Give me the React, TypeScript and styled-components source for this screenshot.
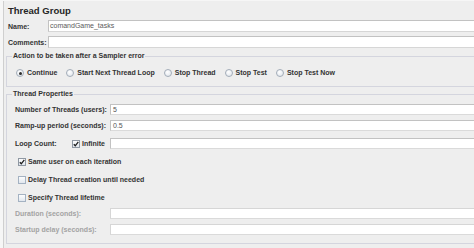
import React from 'react'

import styled, { createGlobalStyle } from 'styled-components'

const GlobalStyle = createGlobalStyle`
  html, body {
    margin: 0;
    padding: 0;
  }
  body {
    width: 474px;
    height: 248px;
    overflow: hidden;
    background: #f6f6f6;
    font-family: "Liberation Sans", Arial, sans-serif;
  }
`

export default function App() {
  return (
    <>
      <GlobalStyle />
      <Page>
        <Panel>
          <Title>Thread Group</Title>
          <TopRow $mt={2}>
            <TopLabel>Name:</TopLabel>
            <TopField>comandGame_tasks</TopField>
          </TopRow>
          <TopRow $mt={4}>
            <TopLabel>Comments:</TopLabel>
            <TopField />
          </TopRow>

          <Group $mt={3} $pt={7} $pb={8}>
            <Legend>Action to be taken after a Sampler error</Legend>
            <RadioRow>
              <RadioOption>
                <Radio $on />
                <OptionText>Continue</OptionText>
              </RadioOption>
              <RadioOption>
                <Radio />
                <OptionText>Start Next Thread Loop</OptionText>
              </RadioOption>
              <RadioOption>
                <Radio />
                <OptionText>Stop Thread</OptionText>
              </RadioOption>
              <RadioOption>
                <Radio />
                <OptionText>Stop Test</OptionText>
              </RadioOption>
              <RadioOption>
                <Radio />
                <OptionText>Stop Test Now</OptionText>
              </RadioOption>
            </RadioRow>
          </Group>

          <Group $mt={2} $pt={5} $pb={8}>
            <Legend>Thread Properties</Legend>
            <InputRow $mt={0}>
              <LabelCell>
                <FieldLabel>Number of Threads (users):</FieldLabel>
              </LabelCell>
              <Field>5</Field>
            </InputRow>
            <InputRow $mt={5}>
              <LabelCell>
                <FieldLabel>Ramp-up period (seconds):</FieldLabel>
              </LabelCell>
              <Field>0.5</Field>
            </InputRow>
            <InputRow $mt={7}>
              <LabelCell>
                <LoopLabel>Loop Count:</LoopLabel>
                <CheckBox $on>
                  <CheckMark />
                </CheckBox>
                <InlineText>Infinite</InlineText>
              </LabelCell>
              <Field />
            </InputRow>
            <CheckRow $mt={8}>
              <CheckBox $on>
                <CheckMark />
              </CheckBox>
              <OptionText>Same user on each iteration</OptionText>
            </CheckRow>
            <CheckRow $mt={8}>
              <CheckBox />
              <OptionText>Delay Thread creation until needed</OptionText>
            </CheckRow>
            <CheckRow $mt={8}>
              <CheckBox />
              <OptionText>Specify Thread lifetime</OptionText>
            </CheckRow>
            <InputRow $mt={5}>
              <LabelCell>
                <FieldLabel $disabled>Duration (seconds):</FieldLabel>
              </LabelCell>
              <Field $disabled />
            </InputRow>
            <InputRow $mt={5}>
              <LabelCell>
                <FieldLabel $disabled>Startup delay (seconds):</FieldLabel>
              </LabelCell>
              <Field $disabled />
            </InputRow>
          </Group>
        </Panel>
      </Page>
    </>
  )
}

function CheckMark() {
  return (
    <svg width="6" height="6" viewBox="0 0 6 6">
      <path d="M0.8 3.2 L2.3 4.8 L5.3 0.8" fill="none" stroke="#1e1e1e" strokeWidth="1.3" />
    </svg>
  )
}

const Page = styled.div`
  width: 474px;
  height: 248px;
  box-sizing: border-box;
  padding: 1px 0 0 3px;
  background: #f6f6f6;
  overflow: hidden;
`
const Panel = styled.div`
  height: 100%;
  box-sizing: border-box;
  border-left: 1px solid #cfcfcf;
  background: #eeeeee;
  padding: 3px 0 0 4px;
  display: flex;
  flex-direction: column;
`
const Title = styled.div`
  height: 14px;
  font-weight: 700;
  font-size: 9.5px;
  line-height: 14px;
  color: #262626;
`
const TopRow = styled.div<{ $mt: number }>`
  display: flex;
  align-items: center;
  height: 12px;
  margin-top: ${(p) => p.$mt}px;
  margin-right: -4px;
`
const TopLabel = styled.div`
  width: 40px;
  flex-shrink: 0;
  font-weight: 700;
  font-size: 7px;
  color: #333;
  white-space: nowrap;
`
const TopField = styled.div`
  flex: 1;
  min-width: 0;
  height: 12px;
  box-sizing: border-box;
  padding: 0 1px;
  border: 1px solid #c2c2c2;
  border-bottom-color: #d6d6d6;
  background: #ffffff;
  font-size: 7px;
  line-height: 10px;
  color: #5a5a5a;
  white-space: nowrap;
`
const Group = styled.fieldset<{ $mt: number; $pt: number; $pb: number }>`
  margin: ${(p) => p.$mt}px -12px 0 -2px;
  padding: ${(p) => p.$pt}px 0 ${(p) => p.$pb}px 5px;
  min-width: 0;
  border: 1px solid #d4d5de;
  display: flex;
  flex-direction: column;
`
const Legend = styled.legend`
  padding: 0 1px;
  font-weight: 700;
  font-size: 7px;
  line-height: 10px;
  color: #333;
`
const RadioRow = styled.div`
  display: flex;
  align-items: center;
  gap: 9px;
  height: 10px;
  padding-left: 4px;
`
const RadioOption = styled.div`
  display: flex;
  align-items: center;
  gap: 3px;
`
const Radio = styled.span<{ $on?: boolean }>`
  position: relative;
  width: 8px;
  height: 8px;
  box-sizing: border-box;
  flex-shrink: 0;
  border-radius: 50%;
  border: 1px solid #a3adb9;
  background: radial-gradient(circle at 40% 35%, #ffffff 0%, #dce2e9 100%);
  &::after {
    content: '';
    display: ${(p) => (p.$on ? 'block' : 'none')};
    position: absolute;
    inset: 1.5px;
    border-radius: 50%;
    background: #2e2e2e;
  }
`
const OptionText = styled.span`
  font-weight: 700;
  font-size: 7px;
  line-height: 10px;
  color: #333;
  white-space: nowrap;
`
const InputRow = styled.div<{ $mt: number }>`
  display: flex;
  align-items: center;
  height: 11px;
  margin-top: ${(p) => p.$mt}px;
  padding-left: 3px;
`
const LabelCell = styled.div`
  width: 95px;
  flex-shrink: 0;
  display: flex;
  align-items: center;
`
const FieldLabel = styled.span<{ $disabled?: boolean }>`
  font-weight: 700;
  font-size: 7px;
  color: ${(p) => (p.$disabled ? '#a3a3a3' : '#333')};
  white-space: nowrap;
`
const LoopLabel = styled(FieldLabel)`
  width: 57px;
  flex-shrink: 0;
`
const InlineText = styled.span`
  margin-left: 2px;
  font-weight: 700;
  font-size: 7px;
  color: #333;
  white-space: nowrap;
`
const Field = styled.div<{ $disabled?: boolean }>`
  flex: 1;
  min-width: 0;
  height: 11px;
  box-sizing: border-box;
  padding: 0 2px;
  border: 1px solid ${(p) => (p.$disabled ? '#d6d6d6' : '#c2c2c2')};
  border-bottom-color: #dadada;
  background: #ffffff;
  font-size: 7px;
  line-height: 9px;
  color: #555;
  white-space: nowrap;
`
const CheckRow = styled.div<{ $mt: number }>`
  display: flex;
  align-items: center;
  gap: 2px;
  height: 10px;
  margin-top: ${(p) => p.$mt}px;
  padding-left: 6px;
`
const CheckBox = styled.span<{ $on?: boolean }>`
  width: 8px;
  height: 8px;
  box-sizing: border-box;
  flex-shrink: 0;
  display: flex;
  align-items: center;
  justify-content: center;
  border: 1px solid ${(p) => (p.$on ? '#8f98a3' : '#a4b2c2')};
  background: linear-gradient(#fdfdfd, #e1e7ee);
`
